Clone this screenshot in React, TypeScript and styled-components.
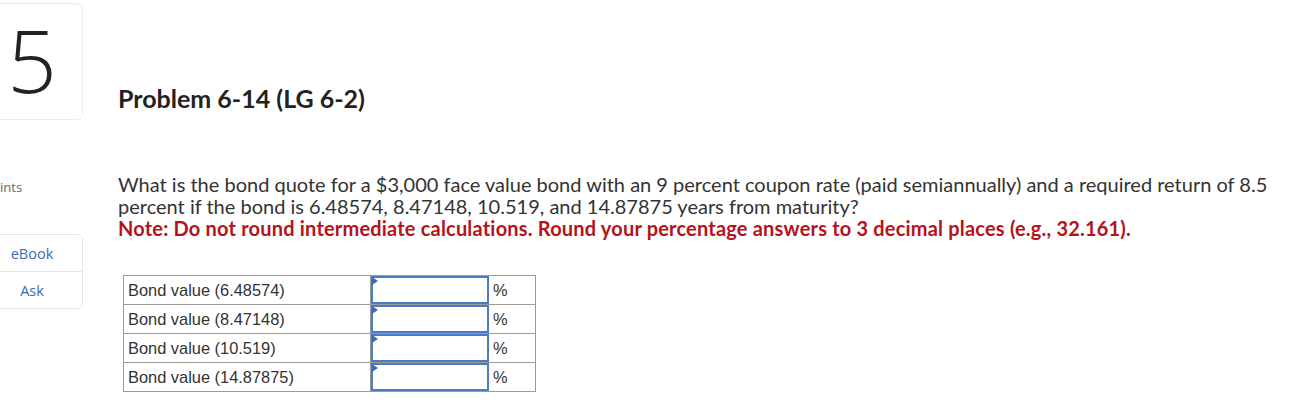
import React from 'react';
import styled, { createGlobalStyle } from 'styled-components';

const GlobalStyle = createGlobalStyle`
  html, body {
    margin: 0;
    padding: 0;
    background: #fff;
  }
  body {
    font-family: Lato, "Liberation Sans", sans-serif;
    color: #333;
    overflow: hidden;
  }
`;

const rows = [
  { label: 'Bond value (6.48574)' },
  { label: 'Bond value (8.47148)' },
  { label: 'Bond value (10.519)' },
  { label: 'Bond value (14.87875)' },
];

const App = () => {
  return (
    <>
      <GlobalStyle />
      <Page>
        <Side>
          <NumberBox>5</NumberBox>
          <Points>ints</Points>
          <LinkBox>
            <SideLink>eBook</SideLink>
            <SideLink>Ask</SideLink>
          </LinkBox>
        </Side>
        <Main>
          <Title>Problem 6-14 (LG 6-2)</Title>
          <Question>
            What is the bond quote for a $3,000 face value bond with an 9 percent coupon rate (paid
            semiannually) and a required return of 8.5
            <br />
            percent if the bond is 6.48574, 8.47148, 10.519, and 14.87875 years from maturity?
          </Question>
          <Note>
            Note: Do not round intermediate calculations. Round your percentage answers to 3 decimal
            places (e.g., 32.161).
          </Note>
          <AnswerTable>
            <tbody>
              {rows.map((r) => (
                <tr key={r.label}>
                  <LabelCell>{r.label}</LabelCell>
                  <InputCell>
                    <AnswerInput type="text" />
                    <Flag />
                  </InputCell>
                  <UnitCell>%</UnitCell>
                </tr>
              ))}
            </tbody>
          </AnswerTable>
        </Main>
      </Page>
    </>
  );
};

export default App;

const Page = styled.div`
  display: flex;
  align-items: flex-start;
  padding-top: 3px;
`;

const Side = styled.div`
  width: 102px;
  margin-left: -19px;
  flex-shrink: 0;
  display: flex;
  flex-direction: column;
`;

const NumberBox = styled.div`
  height: 117px;
  border: 1px solid #ececec;
  border-radius: 7px;
  box-sizing: border-box;
  display: flex;
  align-items: center;
  justify-content: center;
  font-family: "Open Sans", sans-serif;
  font-weight: 300;
  font-size: 87px;
  line-height: 100px;
  color: #222;
  padding-bottom: 6px;
`;

const Points = styled.div`
  margin-top: 58px;
  padding-left: 19px;
  font-family: "Open Sans", sans-serif;
  font-size: 13px;
  color: #666;
  height: 56px;
`;

const LinkBox = styled.div`
  border: 1px solid #e6e6e6;
  border-radius: 6px;
  display: flex;
  flex-direction: column;
`;

const SideLink = styled.div`
  height: 36px;
  display: flex;
  align-items: center;
  justify-content: center;
  font-family: "Open Sans", sans-serif;
  font-size: 14.5px;
  color: #3c6bb5;
  & + & {
    border-top: 1px solid #e6e6e6;
  }
`;

const Main = styled.div`
  margin-left: 35px;
  display: flex;
  flex-direction: column;
  align-items: flex-start;
`;

const Title = styled.h2`
  margin: 80px 0 0;
  font-size: 25px;
  font-weight: 700;
  color: #222;
  line-height: 30px;
`;

const Question = styled.p`
  margin: 60px 0 0;
  font-size: 20px;
  line-height: 22px;
  color: #333;
  white-space: nowrap;
`;

const Note = styled.p`
  margin: 0;
  font-size: 20px;
  line-height: 22px;
  font-weight: 700;
  letter-spacing: 0.19px;
  color: #b5121b;
  white-space: nowrap;
`;

const AnswerTable = styled.table`
  margin: 36px 0 0 5px;
  border-collapse: collapse;
  table-layout: fixed;
  width: 413px;
  font-family: "Liberation Sans", Arial, sans-serif;
  font-size: 16.4px;
  color: #333;
`;

const LabelCell = styled.td`
  width: 247px;
  height: 28px;
  padding: 0 4px;
  border: 1px solid #9a9a9a;
  box-sizing: border-box;
`;

const InputCell = styled.td`
  position: relative;
  width: 118px;
  padding: 0;
  border: 1px solid #9a9a9a;
  box-sizing: border-box;
`;

const AnswerInput = styled.input`
  display: block;
  width: 118px;
  height: 28px;
  box-sizing: border-box;
  border: 2px solid #4a7bc4;
  margin: 0;
  outline: none;
  background: #fff;
`;

const Flag = styled.span`
  position: absolute;
  top: 1px;
  left: 1px;
  width: 0;
  height: 0;
  border-top: 4px solid transparent;
  border-bottom: 4px solid transparent;
  border-left: 6px solid #3c6bb5;
`;

const UnitCell = styled.td`
  width: 47px;
  padding: 0 4px;
  border: 1px solid #9a9a9a;
  box-sizing: border-box;
`;
